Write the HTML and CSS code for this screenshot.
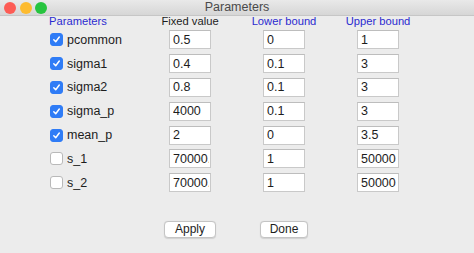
FILE: index.html
```html
<!DOCTYPE html>
<html lang="en">
<head>
  <meta charset="UTF-8">
  <title>Parameters</title>
  <link rel="stylesheet" href="styles.css">
</head>
<body>
  <div class="window">
    <div class="titlebar">
      <div class="lights">
        <span class="light red"></span>
        <span class="light yellow"></span>
        <span class="light green"></span>
      </div>
      <div class="title">Parameters</div>
    </div>

    <div class="grid">
      <div class="head left blue">Parameters</div>
      <div class="head">Fixed value</div>
      <div class="head blue">Lower bound</div>
      <div class="head blue">Upper bound</div>

      <label class="param"><span class="check on"><svg viewBox="0 0 13 13"><path d="M3.3 6.8 L5.6 9.2 L9.8 3.6" /></svg></span>pcommon</label>
      <div class="cell"><input value="0.5"></div>
      <div class="cell"><input value="0"></div>
      <div class="cell"><input value="1"></div>

      <label class="param"><span class="check on"><svg viewBox="0 0 13 13"><path d="M3.3 6.8 L5.6 9.2 L9.8 3.6" /></svg></span>sigma1</label>
      <div class="cell"><input value="0.4"></div>
      <div class="cell"><input value="0.1"></div>
      <div class="cell"><input value="3"></div>

      <label class="param"><span class="check on"><svg viewBox="0 0 13 13"><path d="M3.3 6.8 L5.6 9.2 L9.8 3.6" /></svg></span>sigma2</label>
      <div class="cell"><input value="0.8"></div>
      <div class="cell"><input value="0.1"></div>
      <div class="cell"><input value="3"></div>

      <label class="param"><span class="check on"><svg viewBox="0 0 13 13"><path d="M3.3 6.8 L5.6 9.2 L9.8 3.6" /></svg></span>sigma_p</label>
      <div class="cell"><input value="4000"></div>
      <div class="cell"><input value="0.1"></div>
      <div class="cell"><input value="3"></div>

      <label class="param"><span class="check on"><svg viewBox="0 0 13 13"><path d="M3.3 6.8 L5.6 9.2 L9.8 3.6" /></svg></span>mean_p</label>
      <div class="cell"><input value="2"></div>
      <div class="cell"><input value="0"></div>
      <div class="cell"><input value="3.5"></div>

      <label class="param"><span class="check"></span>s_1</label>
      <div class="cell"><input value="70000.0"></div>
      <div class="cell"><input value="1"></div>
      <div class="cell"><input value="50000"></div>

      <label class="param"><span class="check"></span>s_2</label>
      <div class="cell"><input value="70000.0"></div>
      <div class="cell"><input value="1"></div>
      <div class="cell"><input value="50000"></div>
    </div>

    <div class="buttons">
      <div></div>
      <div class="cell"><button class="apply">Apply</button></div>
      <div class="cell"><button class="done">Done</button></div>
    </div>
  </div>
</body>
</html>
```

FILE: styles.css
```css
body {
  margin: 0;
  background-color: #ececec;
  font-family: "Liberation Sans", Arial, sans-serif;
  color: #1d1d1d;
}
.window {
  width: 474px;
  height: 253px;
  background-color: #ececec;
  overflow: hidden;
}
.titlebar {
  height: 15px;
  background: linear-gradient(#e9e9e9, #d6d6d6);
  border-bottom: 1px solid #c6c6c6;
  display: flex;
  align-items: center;
  position: relative;
}
.lights {
  display: flex;
  gap: 3.5px;
  margin-left: 4px;
}
.light {
  width: 12px;
  height: 12px;
  border-radius: 50%;
}
.red { background-color: #fd5c55; }
.yellow { background-color: #fdbb2f; }
.green { background-color: #27c43f; }
.title {
  position: absolute;
  left: 0;
  right: 0;
  top: 0;
  line-height: 15px;
  text-align: center;
  font-size: 12.5px;
  color: #4a4a4a;
}
.grid {
  display: grid;
  grid-template-columns: repeat(4, 94px);
  grid-template-rows: 13px;
  grid-auto-rows: 23.8px;
  padding-left: 49px;
  margin-top: -1px;
}
.head {
  font-size: 11.2px;
  line-height: 13px;
  text-align: center;
}
.head.left {
  text-align: left;
}
.blue {
  color: #2b2bd0;
}
.param {
  display: flex;
  align-items: center;
  font-size: 12.5px;
}
.check {
  width: 13px;
  height: 13px;
  box-sizing: border-box;
  border-radius: 3px;
  background-color: #fff;
  border: 1px solid #b9b9b9;
  margin-left: 1px;
  margin-right: 4px;
  display: flex;
}
.check.on {
  background-color: #2f7cf6;
  border-color: #2f7cf6;
}
.check svg {
  width: 11px;
  height: 11px;
}
.check path {
  fill: none;
  stroke: #fff;
  stroke-width: 1.7;
  stroke-linecap: round;
  stroke-linejoin: round;
}
.cell {
  display: flex;
  align-items: center;
  justify-content: center;
}
input {
  width: 42px;
  height: 19px;
  box-sizing: border-box;
  border: 1px solid #c9c9c9;
  border-top-color: #bdbdbd;
  background-color: #fff;
  padding: 0 1px 0 3px;
  font-family: "Liberation Sans", Arial, sans-serif;
  font-size: 12.5px;
  color: #1d1d1d;
  outline: none;
}
.buttons {
  display: grid;
  grid-template-columns: repeat(4, 94px);
  padding-left: 49px;
  margin-top: 26px;
}
button {
  height: 17px;
  box-sizing: border-box;
  padding: 0;
  background-color: #fff;
  border: 1px solid #c4c4c4;
  border-radius: 4px;
  box-shadow: 0 0.5px 1px rgba(0, 0, 0, 0.12);
  font-family: "Liberation Sans", Arial, sans-serif;
  font-size: 12px;
  color: #1d1d1d;
}
.apply { width: 52px; }
.done { width: 48px; }
```
